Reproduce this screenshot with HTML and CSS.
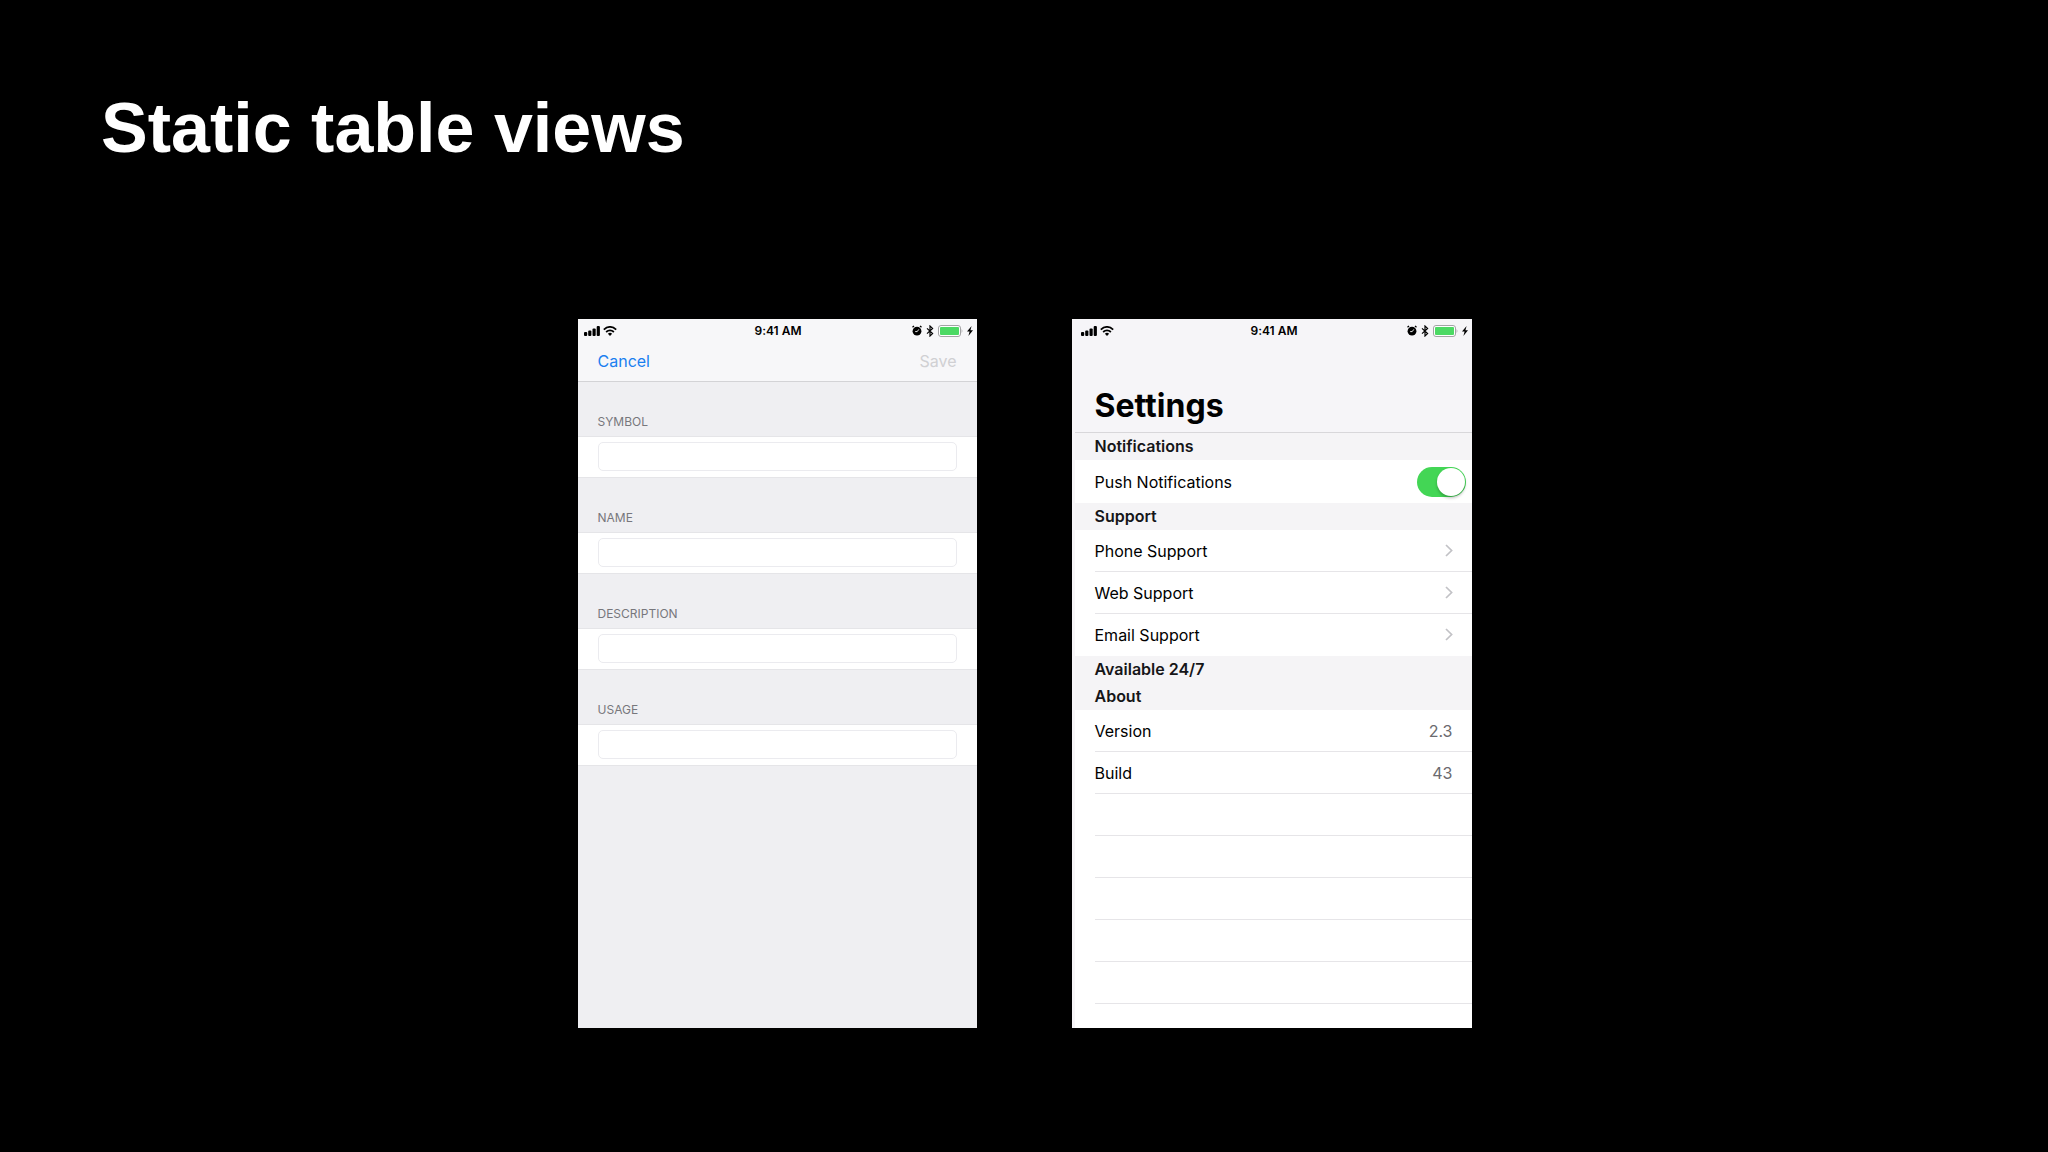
FILE: index.html
```html
<!DOCTYPE html>
<html lang="en">

<head>
    <meta charset="utf-8">
    <title>Static table views</title>
    <link rel="stylesheet" href="styles.css">
</head>

<body>
    <!-- status icons shared by both phones -->
    <svg class="symbols" xmlns="http://www.w3.org/2000/svg" aria-hidden="true">
        <symbol id="signal" viewBox="0 0 16 10">
            <rect x="0" y="6" width="3.2" height="4" rx="1" />
            <rect x="4.2" y="4.6" width="3.2" height="5.4" rx="1" />
            <rect x="8.5" y="2.4" width="3.2" height="7.6" rx="1" />
            <rect x="12.7" y="0" width="3.2" height="10" rx="1" />
        </symbol>
        <symbol id="wifi" viewBox="0 0 14 10">
            <path d="M0.8 3.6 Q7 -1.8 13.2 3.6 M3.1 6 Q7 2.7 10.9 6" fill="none" stroke="black" stroke-width="1.8" />
            <path d="M4.9 7.7 Q7 6 9.1 7.7 L7 10 Z" />
        </symbol>
        <symbol id="alarm" viewBox="0 0 10 11">
            <circle cx="5" cy="6.2" r="4.4" />
            <path d="M0.5 2.2 L2 0.9 M9.5 2.2 L8 0.9" stroke="black" stroke-width="1.3" />
            <path d="M3.2 6.6 H5.2 L6.8 4.4" fill="none" stroke="white" stroke-width="0.9" />
        </symbol>
        <symbol id="bluetooth" viewBox="0 0 8 12">
            <path d="M1 3.4 L6.6 8.6 L4 11 V1 L6.6 3.4 L1 8.6" fill="none" stroke="black" stroke-width="1.2" />
        </symbol>
        <symbol id="battery" viewBox="0 0 25 12">
            <rect x="0.5" y="0.5" width="22" height="11" rx="2.5" fill="white" stroke="#a3a3a5" />
            <rect x="2" y="2" width="19" height="8" rx="1" fill="#4cd964" />
            <path d="M23.6 4 Q25.2 6 23.6 8 Z" fill="#a3a3a5" />
        </symbol>
        <symbol id="bolt" viewBox="0 0 6 10">
            <path d="M4.6 0 L0 5.6 H2.6 L1.4 10 L6 4.2 H3.4 Z" />
        </symbol>
        <symbol id="chevron" viewBox="0 0 8 13">
            <path d="M1 1 L6.6 6.5 L1 12" fill="none" stroke="#c2c2c6" stroke-width="1.7" />
        </symbol>
    </svg>

    <main class="slide">
        <h1>Static table views</h1>

        <div class="phones">
            <form class="phone form_screen">
                <div class="top">
                    <div class="status">
                        <div class="left">
                            <svg class="signal"><use href="#signal" /></svg>
                            <svg class="wifi"><use href="#wifi" /></svg>
                        </div>
                        <div class="time">9:41 AM</div>
                        <div class="right">
                            <svg class="alarm"><use href="#alarm" /></svg>
                            <svg class="bluetooth"><use href="#bluetooth" /></svg>
                            <svg class="battery"><use href="#battery" /></svg>
                            <svg class="bolt"><use href="#bolt" /></svg>
                        </div>
                    </div>
                    <div class="toolbar">
                        <button type="button">Cancel</button>
                        <button type="submit" disabled>Save</button>
                    </div>
                </div>

                <label for="symbol">SYMBOL</label>
                <div class="cell"><input type="text" id="symbol"></div>
                <label for="name">NAME</label>
                <div class="cell"><input type="text" id="name"></div>
                <label for="description">DESCRIPTION</label>
                <div class="cell"><input type="text" id="description"></div>
                <label for="usage">USAGE</label>
                <div class="cell"><input type="text" id="usage"></div>
            </form>

            <section class="phone settings_screen">
                <div class="top">
                    <div class="status">
                        <div class="left">
                            <svg class="signal"><use href="#signal" /></svg>
                            <svg class="wifi"><use href="#wifi" /></svg>
                        </div>
                        <div class="time">9:41 AM</div>
                        <div class="right">
                            <svg class="alarm"><use href="#alarm" /></svg>
                            <svg class="bluetooth"><use href="#bluetooth" /></svg>
                            <svg class="battery"><use href="#battery" /></svg>
                            <svg class="bolt"><use href="#bolt" /></svg>
                        </div>
                    </div>
                    <h2>Settings</h2>
                </div>

                <h3>Notifications</h3>
                <div class="row switch_row">
                    <label for="push">Push Notifications</label>
                    <input type="checkbox" role="switch" id="push" checked>
                </div>

                <h3>Support</h3>
                <a class="row" href="#phone">Phone Support <svg class="chevron"><use href="#chevron" /></svg></a>
                <a class="row" href="#web">Web Support <svg class="chevron"><use href="#chevron" /></svg></a>
                <a class="row last" href="#email">Email Support <svg class="chevron"><use href="#chevron" /></svg></a>
                <p class="footer">Available 24/7</p>

                <h3>About</h3>
                <div class="row">Version <span class="value">2.3</span></div>
                <div class="row">Build <span class="value">43</span></div>

                <!-- empty rows under the table -->
                <div class="row"></div>
                <div class="row"></div>
                <div class="row"></div>
                <div class="row"></div>
                <div class="row"></div>
            </section>
        </div>
    </main>
</body>

</html>
```

FILE: styles.css
```css
* {
    box-sizing: border-box;
}

body {
    margin: 0;
    background-color: black;
    font-family: Inter, "Liberation Sans", sans-serif;
    font-size: 16px;
    font-variant-ligatures: none;
    color: black;
}

.symbols {
    display: none;
}

.slide {
    min-height: 100vh;
    padding: 88px 100px 40px 101px;
}

h1 {
    margin: 0;
    font-family: "Liberation Sans", Arial, sans-serif;
    font-size: 70px;
    line-height: 80px;
    color: white;
}

.phones {
    display: flex;
    flex-wrap: wrap;
    justify-content: center;
    gap: 95px;
    margin-top: 151px;
}

.phone {
    width: 399px;
    min-height: 709px;
}

.status {
    display: grid;
    grid-template-columns: 1fr auto 1fr;
    align-items: center;
    height: 23px;
    padding: 0 4px 0 6px;
}

.status .left,
.status .right {
    display: flex;
    align-items: center;
    gap: 3px;
}

.status .right {
    justify-content: flex-end;
    gap: 4px;
}

.status .time {
    font-size: 12px;
    font-weight: 600;
}

.signal {
    width: 16px;
    height: 10px;
}

.wifi {
    width: 14px;
    height: 10px;
}

.alarm {
    width: 10px;
    height: 11px;
}

.bluetooth {
    width: 8px;
    height: 12px;
}

.battery {
    width: 25px;
    height: 12px;
}

.bolt {
    width: 6px;
    height: 10px;
}

/* form */

.form_screen {
    background-color: #efeff2;
}

.form_screen .top {
    background-color: #f7f7f9;
    border-bottom: 1px solid #d3d3d6;
}

.toolbar {
    display: flex;
    justify-content: space-between;
    height: 39px;
    padding: 0 20px 2px;
}

.toolbar button {
    padding: 0;
    border: none;
    background: none;
    font: inherit;
    color: #1a7ff0;
    cursor: pointer;
}

.toolbar button:disabled {
    color: #d0d0d3;
    cursor: default;
}

.form_screen label {
    display: block;
    padding: 32px 20px 6px;
    font-size: 12px;
    line-height: 16px;
    color: #77777c;
}

.cell {
    padding: 5px 20px 6px;
    background-color: white;
    border: 1px solid #e5e5e8;
    border-left: none;
    border-right: none;
}

.cell input {
    display: block;
    width: 100%;
    height: 29px;
    padding: 0 8px;
    border: 1px solid #ebebef;
    border-radius: 5px;
    background-color: white;
    font: inherit;
}

/* settings */

.settings_screen {
    width: 400px;
    background-color: white;
    border-left: 3px solid #f7f5f8;
}

.settings_screen .top {
    background-color: #f6f5f8;
    border-bottom: 1px solid #d8d7da;
}

h2 {
    margin: 0;
    padding: 44px 20px 6px;
    font-size: 32px;
    line-height: 40px;
}

h3,
.footer {
    margin: 0;
    padding: 0 20px;
    background-color: #f5f4f6;
    font-size: 16px;
    font-weight: 600;
    line-height: 27px;
    color: #161618;
}

.row {
    display: flex;
    align-items: center;
    justify-content: space-between;
    height: 42px;
    margin-left: 20px;
    padding-right: 19px;
    border-bottom: 1px solid #e6e5e8;
    color: black;
    text-decoration: none;
}

.row.last {
    border-bottom-color: white;
}

.switch_row {
    height: 43px;
    padding-right: 6px;
    border-bottom: none;
}

.chevron {
    width: 8px;
    height: 13px;
}

.value {
    color: #6a6a6e;
}

.switch_row input {
    appearance: none;
    width: 49px;
    height: 30px;
    margin: 0;
    padding: 1px;
    border-radius: 15px;
    background-color: #d8d8dc;
    cursor: pointer;
}

.switch_row input::before {
    content: "";
    display: block;
    width: 28px;
    height: 28px;
    border-radius: 50%;
    background-color: white;
    box-shadow: 0 2px 3px rgba(0, 0, 0, 0.25);
}

.switch_row input:checked {
    background-color: #43d655;
}

.switch_row input:checked::before {
    margin-left: auto;
}
```
